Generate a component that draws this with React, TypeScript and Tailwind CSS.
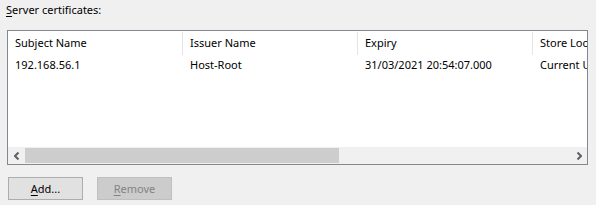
import { } from 'react';

// Columns of the certificate list
const columns = ['Subject Name', 'Issuer Name', 'Expiry', 'Store Location'];

const rows = [
  { subject: '192.168.56.1', issuer: 'Host-Root', expiry: '31/03/2021 20:54:07.000', store: 'Current User' },
];

export default function App() {
  return (
    <div
      className="w-[596px] h-[205px] bg-[#f0f0f0] text-[11px] text-black overflow-hidden"
      style={{ fontFamily: '"Segoe UI", "Noto Sans", "Liberation Sans", sans-serif' }}
    >
      {/* Label */}
      <div className="pl-[6px] pt-[2px] h-[30px] leading-[16px]">
        <span className="underline underline-offset-2">S</span>erver certificates:
      </div>

      {/* List view */}
      <div className="ml-[7px] w-[581px] h-[135px] border border-[#828790] bg-white flex flex-col">
        <div className="flex-1 overflow-hidden">
          <div className="flex w-[640px] h-[25px]">
            {columns.map((c) => (
              <div
                key={c}
                className="w-[175px] shrink-0 flex items-center pl-[7px] border-r border-[#e5e5e5] my-[1px] whitespace-nowrap"
              >
                {c}
              </div>
            ))}
          </div>
          {rows.map((r) => (
            <div key={r.subject} className="flex w-[640px] h-[19px] items-center whitespace-nowrap">
              <div className="w-[175px] shrink-0 pl-[7px]">{r.subject}</div>
              <div className="w-[175px] shrink-0 pl-[7px]">{r.issuer}</div>
              <div className="w-[175px] shrink-0 pl-[7px]">{r.expiry}</div>
              <div className="w-[175px] shrink-0 pl-[7px]">{r.store}</div>
            </div>
          ))}
        </div>

        {/* Horizontal scrollbar */}
        <div className="h-[17px] bg-[#f0f0f0] flex items-stretch">
          <div className="w-[17px] flex items-center justify-center">
            <svg width="6" height="8" viewBox="0 0 6 8">
              <path d="M4.5 0.5 L1 4 L4.5 7.5" stroke="#606060" strokeWidth="2" fill="none" />
            </svg>
          </div>
          <div className="w-[314px] bg-[#cdcdcd] my-[1px]" />
          <div className="flex-1" />
          <div className="w-[17px] flex items-center justify-center">
            <svg width="6" height="8" viewBox="0 0 6 8">
              <path d="M1.5 0.5 L5 4 L1.5 7.5" stroke="#606060" strokeWidth="2" fill="none" />
            </svg>
          </div>
        </div>
      </div>

      {/* Buttons */}
      <div className="flex gap-[14px] pl-[8px] pt-[12px]">
        <button className="w-[75px] h-[23px] bg-[#e1e1e1] border border-[#adadad] leading-none">
          <span className="underline underline-offset-2">A</span>dd...
        </button>
        <button disabled className="w-[75px] h-[23px] bg-[#cccccc] border border-[#bfbfbf] text-[#838383] leading-none">
          <span className="underline underline-offset-2">R</span>emove
        </button>
      </div>
    </div>
  );
}
